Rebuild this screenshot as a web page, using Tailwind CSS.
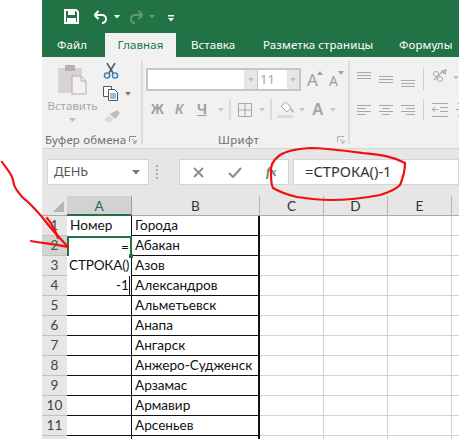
<!DOCTYPE html>
<html><head><meta charset="utf-8"><script src="https://cdn.jsdelivr.net/npm/@tailwindcss/browser@4"></script></head>
<body class="m-0 bg-white">
<div class="relative flex w-[459px] h-[439px] overflow-hidden bg-white font-['Noto_Sans','Open_Sans',sans-serif]">
  <div class="w-[42px] shrink-0"></div>
  <div class="w-[417px] shrink-0 flex flex-col bg-[#e6e6e6]">
    <!-- title bar -->
    <div class="h-[33px] bg-[#217346] flex items-center pl-[22px] shrink-0">
      <svg width="15" height="15" viewBox="0 0 15 15"><path d="M1 1h11l2 2v11H1z" fill="none" stroke="#fff" stroke-width="2"/><rect x="4" y="1" width="7" height="5" fill="#fff"/><rect x="3" y="9" width="9" height="5" fill="#fff"/></svg>
      <svg class="ml-[14px]" width="15" height="14" viewBox="0 0 15 14"><path d="M1.500 5H9a4 4 0 0 1 4 4c0 2.500-2 4-4 4M1.500 5 5.500 1M1.500 5 5.500 9" fill="none" stroke="#fff" stroke-width="2"/></svg>
      <svg class="ml-[6px]" width="6" height="4" viewBox="0 0 6 4"><path d="M0 0h6L3 3.500z" fill="#fff"/></svg>
      <svg class="ml-[9px]" width="15" height="14" viewBox="0 0 15 14"><path d="M13.500 5H6a4 4 0 0 0-4 4c0 2.500 2 4 4 4M13.500 5 9.500 1M13.500 5 9.500 9" fill="none" stroke="#5e9a78" stroke-width="2"/></svg>
      <svg class="ml-[5px]" width="6" height="4" viewBox="0 0 6 4"><path d="M0 0h6L3 3.500z" fill="#5e9a78"/></svg>
      <svg class="ml-[13px] mt-[3px]" width="6" height="7" viewBox="0 0 6 7"><path d="M0 0h6v1.500H0zM0 3h6L3 6.500z" fill="#fff"/></svg>
    </div>
    <!-- tabs -->
    <div class="h-[24px] bg-[#217346] flex items-end text-[11.500px] text-white shrink-0 leading-[24px] tracking-[0.1px] whitespace-nowrap">
      <div class="w-[63px] pl-[15px]">Файл</div>
      <div class="w-[71px] h-[24px] bg-[#f1f1f1] text-[#217346] text-center">Главная</div>
      <div class="w-[87px] pl-[15px]">Вставка</div>
      <div class="w-[136px] pl-[0px]">Разметка страницы</div>
      <div>Формулы</div>
    </div>
    <!-- ribbon -->
    <div class="h-[92px] bg-[#f1f1f1] border-b border-[#d4d4d4] flex shrink-0 text-[#a6a6a6] text-[11.500px]">
      <!-- clipboard -->
      <div class="w-[101px] shrink-0 flex flex-col border-r-2 border-[#dcdcdc] mt-[4px] mb-[4px]">
        <div class="flex-1 flex">
          <div class="w-[61px] flex flex-col items-center pt-[4px]">
            <svg width="29" height="30" viewBox="0 0 29 30"><rect x="0" y="3" width="24" height="25" rx="1" fill="#d8d4d6"/><rect x="7" y="0" width="10" height="6" fill="#b5b2b4"/><path d="M14 11h9l5 5v13H14z" fill="#f3f1f4" stroke="#b0aeb0"/><path d="M23 11v5h5" fill="none" stroke="#b0aeb0"/></svg>
            <div class="leading-[16px] mt-[3px] text-[#a8a8a8]">Вставить</div>
            <svg class="mt-[4px]" width="7" height="4" viewBox="0 0 7 4"><path d="M0 0h7L3.500 4z" fill="#bdbdbd"/></svg>
          </div>
          <div class="flex flex-col pt-[2px]">
            <svg width="16" height="16" viewBox="0 0 16 16"><path d="M4 0l6 10M12 0L6 10" stroke="#5a5a5a" stroke-width="1.600"/><circle cx="4" cy="12.500" r="2.600" fill="none" stroke="#2b78c5" stroke-width="1.400"/><circle cx="12" cy="12.500" r="2.600" fill="none" stroke="#2b78c5" stroke-width="1.400"/></svg>
            <div class="flex items-center gap-[6px] mt-[7px]">
              <svg width="16" height="15" viewBox="0 0 16 15"><path d="M.5.500h8v10h-8z" fill="#fff" stroke="#555"/><path d="M5.500 3.500h6l3 3v8h-9z" fill="#fff" stroke="#555"/><path d="M7 8h6M7 10h6M7 12h6" stroke="#2b78c5"/></svg>
              <svg width="6" height="4" viewBox="0 0 6 4"><path d="M0 0h6L3 3.500z" fill="#777"/></svg>
            </div>
            <svg class="mt-[8px]" width="18" height="15" viewBox="0 0 18 15"><path d="M6 6l4 4-3 4-6-3z" fill="#dcdcdc"/><path d="M7 5l7-4 3 3-5 6z" fill="#bdbdbd"/></svg>
          </div>
        </div>
        <div class="h-[12px] flex justify-between pl-[3px] pr-[4px] whitespace-nowrap leading-[16px] text-[11.500px] text-[#6f6f6f] tracking-[0.15px]"><span>Буфер обмена</span>
          <svg class="mt-[4px]" width="8" height="8" viewBox="0 0 8 8"><path d="M.5 6V.5H7M3 3l4 4M4 7h3V4" fill="none" stroke="#8a8a8a"/></svg>
        </div>
      </div>
      <!-- font -->
      <div class="w-[207px] shrink-0 flex flex-col border-r-2 border-[#dcdcdc] mt-[4px] mb-[4px]">
        <div class="flex-1 flex flex-col">
          <div class="flex items-center pl-[3px] pt-[7px]">
            <div class="w-[155px] h-[23px] border-2 border-[#c6c6c6] bg-white flex">
              <div class="w-[96px]"></div>
              <div class="w-[13px] bg-[#e6e6e6] flex items-center justify-center"><svg width="6" height="4" viewBox="0 0 6 4"><path d="M0 0h6L3 3.500z" fill="#bdbdbd"/></svg></div>
              <div class="w-[1px] bg-[#c6c6c6]"></div>
              <div class="w-[29px] pl-[2px] text-[13px] leading-[19px] text-[#a6a6a6]">11</div>
              <div class="w-[12px] bg-[#e6e6e6] flex items-center justify-center"><svg width="6" height="4" viewBox="0 0 6 4"><path d="M0 0h6L3 3.500z" fill="#bdbdbd"/></svg></div>
            </div>
            <span class="ml-[6px] relative text-[17px] leading-[19px] text-[#a0a0a0]">A<svg class="absolute -right-[5px] top-[1px]" width="6" height="4" viewBox="0 0 6 4"><path d="M0 4h6L3 0z" fill="#a0a0a0"/></svg></span>
            <span class="ml-[11px] relative text-[14px] leading-[19px] mt-[2px] text-[#a0a0a0]">A<svg class="absolute -right-[6px] top-0" width="6" height="4" viewBox="0 0 6 4"><path d="M0 0h6L3 4z" fill="#a0a0a0"/></svg></span>
          </div>
          <div class="flex items-center pl-[8px] mt-[8px] h-[21px]">
            <span class="w-[24px] font-['Liberation_Sans',sans-serif] font-bold text-[14px] text-[#9c9c9c]">Ж</span>
            <span class="w-[22px] font-['Liberation_Sans',sans-serif] font-bold italic text-[14px] text-[#a6a6a6]">К</span>
            <span class="w-[21px] font-['Liberation_Sans',sans-serif] font-bold underline text-[14px] text-[#9c9c9c]">Ч</span>
            <svg width="6" height="4" viewBox="0 0 6 4"><path d="M0 0h6L3 3.500z" fill="#c4c4c4"/></svg>
            <i class="ml-[5px] block w-[2px] h-[21px] bg-[#dcdcdc]"></i>
            <svg class="ml-[7px]" width="14" height="14" viewBox="0 0 14 14"><path d="M.5.500h13v13H.5zM7 .5v13M.5 7h13" fill="none" stroke="#a8a8a8"/></svg>
            <svg class="ml-[7px]" width="6" height="4" viewBox="0 0 6 4"><path d="M0 0h6L3 3.500z" fill="#c4c4c4"/></svg>
            <i class="ml-[5px] block w-[2px] h-[21px] bg-[#dcdcdc]"></i>
            <svg class="ml-[5px]" width="17" height="17" viewBox="0 0 17 17"><path d="M4 5l5-4 5 6-4 4z" fill="#fff" stroke="#a8a8a8"/><path d="M14 8c1 1 2 2 2 3.500" fill="none" stroke="#a8a8a8" stroke-width="1.500"/><rect x="0" y="14" width="16" height="3" fill="#dcdcdc"/></svg>
            <svg class="ml-[5px]" width="6" height="4" viewBox="0 0 6 4"><path d="M0 0h6L3 3.500z" fill="#c4c4c4"/></svg>
            <span class="ml-[7px] font-['Liberation_Sans',sans-serif] text-[16px] font-bold text-[#a6a6a6] leading-[16px]">A</span>
            <svg class="ml-[6px]" width="6" height="4" viewBox="0 0 6 4"><path d="M0 0h6L3 3.500z" fill="#c4c4c4"/></svg>
          </div>
        </div>
        <div class="h-[12px] flex justify-between pl-[75px] pr-[3px] leading-[16px] text-[#6f6f6f] tracking-[0.3px]"><span>Шрифт</span>
          <svg class="mt-[4px]" width="8" height="8" viewBox="0 0 8 8"><path d="M.5 6V.5H7M3 3l4 4M4 7h3V4" fill="none" stroke="#b0b0b0"/></svg>
        </div>
      </div>
      <!-- alignment -->
      <div class="flex-1 min-w-0 flex flex-col pl-[7px] mt-[4px] mb-[4px] overflow-hidden">
        <div class="flex items-start gap-[8px] pt-[7px] h-[30px]">
          <svg class="shrink-0 mt-[4px]" width="14" height="8" viewBox="0 0 14 8"><path d="M0 .5h14M0 3.500h14M0 6.500h14" stroke="#a8a8a8"/></svg>
          <svg class="shrink-0 mt-[8px]" width="14" height="8" viewBox="0 0 14 8"><path d="M0 .5h14M0 3.500h14M0 6.500h14" stroke="#a8a8a8"/></svg>
          <svg class="shrink-0 mt-[12px]" width="14" height="8" viewBox="0 0 14 8"><path d="M0 .5h14M0 3.500h14M0 6.500h14" stroke="#a8a8a8"/></svg>
          <i class="shrink-0 block w-[1px] h-[22px] bg-[#d0d0d0]"></i>
          <svg class="shrink-0" width="16" height="18" viewBox="0 0 16 18"><path d="M2 12l8-8M14 2l-1 4-3-3z" fill="none" stroke="#a8a8a8" stroke-width="1.300"/><circle cx="4" cy="6" r="2.500" fill="none" stroke="#a8a8a8"/><circle cx="8" cy="11" r="2.500" fill="none" stroke="#a8a8a8"/></svg>
          <svg class="shrink-0 mt-[8px] -ml-[3px]" width="6" height="4" viewBox="0 0 6 4"><path d="M0 0h6L3 3.500z" fill="#c4c4c4"/></svg>
        </div>
        <div class="flex items-center gap-[8px] mt-[8px] h-[21px]">
          <svg class="shrink-0" width="14" height="10" viewBox="0 0 14 10"><path d="M0 .5h14M0 3.500h9M0 6.500h14M0 9.500h9" stroke="#a8a8a8"/></svg>
          <svg class="shrink-0" width="14" height="10" viewBox="0 0 14 10"><path d="M0 .5h14M3 3.500h8M0 6.500h14M3 9.500h8" stroke="#a8a8a8"/></svg>
          <svg class="shrink-0" width="14" height="10" viewBox="0 0 14 10"><path d="M0 .5h14M5 3.500h9M0 6.500h14M5 9.500h9" stroke="#a8a8a8"/></svg>
          <i class="shrink-0 block w-[1px] h-[21px] bg-[#d0d0d0]"></i>
          <svg class="shrink-0" width="16" height="14" viewBox="0 0 16 14"><path d="M0 .5h16M8 4.500h8M8 8.500h8M0 13.500h16M0 6.500h6M0 6.500 3 4M0 6.500 3 9" fill="none" stroke="#a8a8a8"/></svg>
          <svg class="shrink-0" width="8" height="14" viewBox="0 0 8 14"><path d="M2 .5h6M4 4.500h4M4 8.500h4M2 13.500h6M0 6.500h3" fill="none" stroke="#a8a8a8"/></svg>
        </div>
      </div>
    </div>
    <!-- formula bar area -->
    <div class="h-[47px] flex items-center shrink-0 pl-[5px] pb-[1px] bg-[#e6e6e6]">
      <div class="w-[102px] h-[26px] bg-white border border-[#d4d4d4] flex items-center justify-between pl-[6px] pr-[8px] text-[13px] text-[#555]"><span>ДЕНЬ</span><svg width="8" height="5" viewBox="0 0 8 5"><path d="M0 0h8L4 4.500z" fill="#777"/></svg></div>
      <div class="w-[30px] pr-[15px] flex flex-col items-center gap-[2px]"><i class="block w-[2px] h-[2px] bg-[#aaa]"></i><i class="block w-[2px] h-[2px] bg-[#aaa]"></i><i class="block w-[2px] h-[2px] bg-[#aaa]"></i><i class="block w-[2px] h-[2px] bg-[#aaa]"></i></div>
      <div class="w-[110px] h-[26px] bg-white border border-[#d4d4d4] flex items-center">
        <svg class="ml-[13px]" width="11" height="11" viewBox="0 0 11 11"><path d="M1 1l9 9M10 1l-9 9" stroke="#8c8c8c" stroke-width="1.800"/></svg>
        <svg class="ml-[24px]" width="14" height="11" viewBox="0 0 14 11"><path d="M1 6l4 4 8-9" fill="none" stroke="#8c8c8c" stroke-width="2"/></svg>
        <span class="ml-[24px] text-[13px] italic font-bold text-[#777] font-['Liberation_Serif',serif]">fx</span>
      </div>
      <div class="ml-[4px] flex-1 h-[26px] bg-white border border-[#d4d4d4] pl-[11px] text-[14.700px] leading-[23px] text-[#333]">=СТРОКА()-1</div>
    </div>
    <!-- sheet -->
    <div class="flex-1 min-h-0 bg-white flex flex-col font-['Lato','Liberation_Sans',sans-serif] text-[13.600px] text-[#111]">
      <!-- col headers -->
      <div class="flex h-[20px] shrink-0 bg-[#e6e6e6] border-b border-[#ababab] text-[#333] leading-[20px] text-center">
        <div class="w-[25px] shrink-0 flex items-end justify-end pr-[3px] pb-[3px]"><svg width="11" height="11" viewBox="0 0 11 11"><path d="M11 0v11H0z" fill="#b4b4b4"/></svg></div>
        <div class="w-[65px] shrink-0 bg-[#d2d2d2] text-[#217346] border-b-2 border-[#217346] h-[20px] border-r border-r-[#9f9f9f]">A</div>
        <div class="w-[128px] shrink-0 border-r border-[#b5b5b5]">B</div>
        <div class="w-[64px] shrink-0 border-r border-[#b5b5b5]">C</div>
        <div class="w-[64px] shrink-0 border-r border-[#b5b5b5]">D</div>
        <div class="w-[64px] shrink-0 border-r border-[#b5b5b5]">E</div>
      </div>
      <!-- rows -->
      <div class="grid grid-cols-[25px_65px_128px_64px_64px_64px_7px] auto-rows-[20px] leading-[19px]">
        <div class="bg-[#e6e6e6] text-center text-[#444] border-b border-[#c0c0c0]">1</div><div class="pl-[3px] border-r border-[#111]">Номер</div><div class="pl-[3px] border-b border-r-2 border-[#111]">Города</div><div class="border-b border-r border-[#d4d4d4]"></div><div class="border-b border-r border-[#d4d4d4]"></div><div class="border-b border-r border-[#d4d4d4]"></div><div class="border-b border-[#d4d4d4]"></div>

        <div class="bg-[#d2d2d2] text-center text-[#217346] border-b border-[#c0c0c0]">2</div><div class="relative text-right pr-[1px] border-t-2 border-x-2 border-[#217346]">=<i class="absolute -right-[3px] -bottom-[2px] block w-[4px] h-[4px] bg-[#217346]"></i></div><div class="pl-[3px] border-b border-r-2 border-[#111]">Абакан</div><div class="border-b border-r border-[#d4d4d4]"></div><div class="border-b border-r border-[#d4d4d4]"></div><div class="border-b border-r border-[#d4d4d4]"></div><div class="border-b border-[#d4d4d4]"></div>

        <div class="bg-[#e6e6e6] text-center text-[#444] border-b border-[#c0c0c0]">3</div><div class="whitespace-nowrap pl-[2px] tracking-[-0.2px] border-r border-[#111]">СТРОКА()</div><div class="pl-[3px] border-b border-r-2 border-[#111]">Азов</div><div class="border-b border-r border-[#d4d4d4]"></div><div class="border-b border-r border-[#d4d4d4]"></div><div class="border-b border-r border-[#d4d4d4]"></div><div class="border-b border-[#d4d4d4]"></div>

        <div class="bg-[#e6e6e6] text-center text-[#444] border-b border-[#c0c0c0]">4</div><div class="relative text-right pr-[2px] border-b border-r border-[#111]">-1<i class="absolute right-[1px] top-0 bottom-0 block w-[1px] bg-[#111]"></i></div><div class="pl-[3px] border-b border-r-2 border-[#111]">Александров</div><div class="border-b border-r border-[#d4d4d4]"></div><div class="border-b border-r border-[#d4d4d4]"></div><div class="border-b border-r border-[#d4d4d4]"></div><div class="border-b border-[#d4d4d4]"></div>

        <div class="bg-[#e6e6e6] text-center text-[#444] border-b border-[#c0c0c0]">5</div><div class="border-b border-r border-[#111]"></div><div class="pl-[3px] border-b border-r-2 border-[#111]">Альметьевск</div><div class="border-b border-r border-[#d4d4d4]"></div><div class="border-b border-r border-[#d4d4d4]"></div><div class="border-b border-r border-[#d4d4d4]"></div><div class="border-b border-[#d4d4d4]"></div>

        <div class="bg-[#e6e6e6] text-center text-[#444] border-b border-[#c0c0c0]">6</div><div class="border-b border-r border-[#111]"></div><div class="pl-[3px] border-b border-r-2 border-[#111]">Анапа</div><div class="border-b border-r border-[#d4d4d4]"></div><div class="border-b border-r border-[#d4d4d4]"></div><div class="border-b border-r border-[#d4d4d4]"></div><div class="border-b border-[#d4d4d4]"></div>

        <div class="bg-[#e6e6e6] text-center text-[#444] border-b border-[#c0c0c0]">7</div><div class="border-b border-r border-[#111]"></div><div class="pl-[3px] border-b border-r-2 border-[#111]">Ангарск</div><div class="border-b border-r border-[#d4d4d4]"></div><div class="border-b border-r border-[#d4d4d4]"></div><div class="border-b border-r border-[#d4d4d4]"></div><div class="border-b border-[#d4d4d4]"></div>

        <div class="bg-[#e6e6e6] text-center text-[#444] border-b border-[#c0c0c0]">8</div><div class="border-b border-r border-[#111]"></div><div class="pl-[3px] border-b border-r-2 border-[#111] whitespace-nowrap">Анжеро-Судженск</div><div class="border-b border-r border-[#d4d4d4]"></div><div class="border-b border-r border-[#d4d4d4]"></div><div class="border-b border-r border-[#d4d4d4]"></div><div class="border-b border-[#d4d4d4]"></div>

        <div class="bg-[#e6e6e6] text-center text-[#444] border-b border-[#c0c0c0]">9</div><div class="border-b border-r border-[#111]"></div><div class="pl-[3px] border-b border-r-2 border-[#111]">Арзамас</div><div class="border-b border-r border-[#d4d4d4]"></div><div class="border-b border-r border-[#d4d4d4]"></div><div class="border-b border-r border-[#d4d4d4]"></div><div class="border-b border-[#d4d4d4]"></div>

        <div class="bg-[#e6e6e6] text-center text-[#444] border-b border-[#c0c0c0]">10</div><div class="border-b border-r border-[#111]"></div><div class="pl-[3px] border-b border-r-2 border-[#111]">Армавир</div><div class="border-b border-r border-[#d4d4d4]"></div><div class="border-b border-r border-[#d4d4d4]"></div><div class="border-b border-r border-[#d4d4d4]"></div><div class="border-b border-[#d4d4d4]"></div>

        <div class="bg-[#e6e6e6] text-center text-[#444] border-b border-[#c0c0c0]">11</div><div class="border-b border-r border-[#111]"></div><div class="pl-[3px] border-b border-r-2 border-[#111]">Арсеньев</div><div class="border-b border-r border-[#d4d4d4]"></div><div class="border-b border-r border-[#d4d4d4]"></div><div class="border-b border-r border-[#d4d4d4]"></div><div class="border-b border-[#d4d4d4]"></div>

        <div class="bg-[#e6e6e6]"></div><div class="border-r border-[#111]"></div><div class="border-r-2 border-[#111]"></div><div class="border-r border-[#d4d4d4]"></div><div class="border-r border-[#d4d4d4]"></div><div class="border-r border-[#d4d4d4]"></div><div></div>
      </div>
    </div>
  </div>
  <!-- red annotations -->
  <svg class="absolute left-0 top-0 pointer-events-none" width="459" height="439" viewBox="0 0 459 439" fill="none" stroke="#f01010" stroke-width="2.200" stroke-linecap="round" stroke-linejoin="round">
    <path d="M2 162C6 168 12 174 13 180C14 186 15 188 19 193C22 198 25 199 29 203C34 208 40 214 46 222C52 230 60 238 68 247"/>
    <path d="M31 241C42 243 55 244 68 247"/>
    <path d="M47 218C52 224 55 230 58 238"/>
    <path d="M405 163C392 156 380 155 363 153C340 150 325 148 310 148C296 149 286 151 280 155C273 160 270 166 271 173C271 180 271 185 273 188C280 192 288 195 297 197C310 199 320 200 330 200C350 200 365 198 380 195C390 192 396 189 400 185C403 178 405 170 405 163Z"/>
  </svg>
</div>
</body></html>
